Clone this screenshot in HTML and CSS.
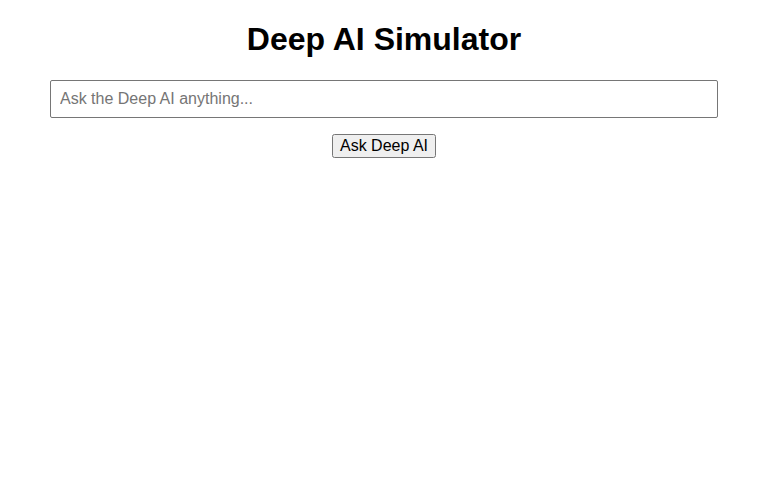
FILE: index.html
```html
<!DOCTYPE html>
<html lang="en">
<head>
<meta charset="utf-8">
<title>Deep AI Simulator</title>
<link rel="stylesheet" href="styles.css">
</head>
<body>
  <main class="app">
    <h1 class="title">Deep AI Simulator</h1>
    <input class="question" type="text" placeholder="Ask the Deep AI anything...">
    <button class="ask" type="button">Ask Deep AI</button>
    <div class="answer"></div>
  </main>
</body>
</html>
```
FILE: styles.css
```css
body {
  margin: 0;
  background: #ffffff;
  font-family: "Liberation Sans", Arial, sans-serif;
  color: #000000;
}

.app {
  display: flex;
  flex-direction: column;
  align-items: center;
  padding: 0 50px;
}

.title {
  margin: 21px 0 22px;
  font-size: 32px;
  font-weight: bold;
  line-height: 37px;
}

.question {
  box-sizing: border-box;
  width: 100%;
  height: 38px;
  margin: 0;
  padding: 0 9px;
  border: 1px solid #767676;
  border-radius: 2px;
  font-family: "Liberation Sans", Arial, sans-serif;
  font-size: 16px;
}

.question::placeholder {
  color: #757575;
}

.ask {
  margin-top: 16px;
  font-family: "Liberation Sans", Arial, sans-serif;
  font-size: 16px;
}
```
